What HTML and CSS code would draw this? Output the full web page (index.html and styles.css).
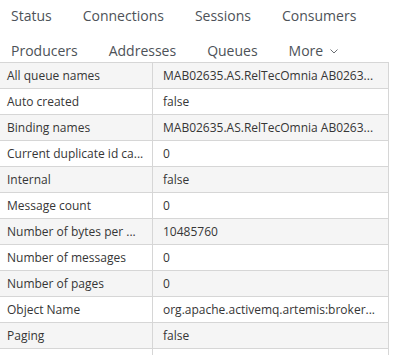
FILE: index.html
```html
<!DOCTYPE html>
<html lang="en">
<head>
    <meta charset="UTF-8">
    <title>Queue attributes</title>
    <link rel="stylesheet" href="styles.css">
</head>
<body>

    <ul class="nav-tabs">
        <li><a href="#">Status</a></li>
        <li><a href="#">Connections</a></li>
        <li><a href="#">Sessions</a></li>
        <li><a href="#">Consumers</a></li>
        <li><a href="#">Producers</a></li>
        <li><a href="#">Addresses</a></li>
        <li><a href="#">Queues</a></li>
        <li><a href="#">More
            <svg class="caret" width="8" height="5" viewBox="0 0 8 5"><polyline points="0.5,0.5 4,4 7.5,0.5" fill="none" stroke="#6a6e73" stroke-width="1"/></svg>
        </a></li>
    </ul>

    <table class="attrs">
        <tr><td>All queue names</td><td>MAB02635.AS.RelTecOmnia AB0263...</td></tr>
        <tr><td>Auto created</td><td>false</td></tr>
        <tr><td>Binding names</td><td>MAB02635.AS.RelTecOmnia AB0263...</td></tr>
        <tr><td>Current duplicate id ca...</td><td>0</td></tr>
        <tr><td>Internal</td><td>false</td></tr>
        <tr><td>Message count</td><td>0</td></tr>
        <tr><td>Number of bytes per ...</td><td>10485760</td></tr>
        <tr><td>Number of messages</td><td>0</td></tr>
        <tr><td>Number of pages</td><td>0</td></tr>
        <tr><td>Object Name</td><td>org.apache.activemq.artemis:broker...</td></tr>
        <tr><td>Paging</td><td>false</td></tr>
        <tr class="more"><td></td><td></td></tr>
    </table>

</body>
</html>
```

FILE: styles.css
```css
body {
    margin: 0;
    font-family: "Open Sans", sans-serif;
    background: #fff;
    overflow: hidden;
}
.nav-tabs {
    list-style: none;
    margin: -1px 0 0;
    padding: 0 0 0 11px;
    width: 360px;
    display: flex;
    flex-wrap: wrap;
    column-gap: 31px;
    row-gap: 3px;
}
.nav-tabs li {
    height: 32px;
    line-height: 32px;
}
.nav-tabs a {
    color: #4d5258;
    font-size: 14px;
    text-decoration: none;
}
.caret {
    margin-left: 3px;
    vertical-align: 2px;
}
.attrs {
    border-collapse: collapse;
    width: 389px;
    margin-top: -4px;
    table-layout: fixed;
    font-size: 12px;
    color: #363636;
}
.attrs td {
    height: 25px;
    padding: 0 10px;
    border: 1px solid #d6d6d6;
    white-space: nowrap;
    overflow: hidden;
}
.attrs td:first-child {
    width: 135px;
    padding-left: 7px;
    border-left: none;
}
.attrs tr:nth-child(odd) {
    background: #f5f5f5;
}
```
